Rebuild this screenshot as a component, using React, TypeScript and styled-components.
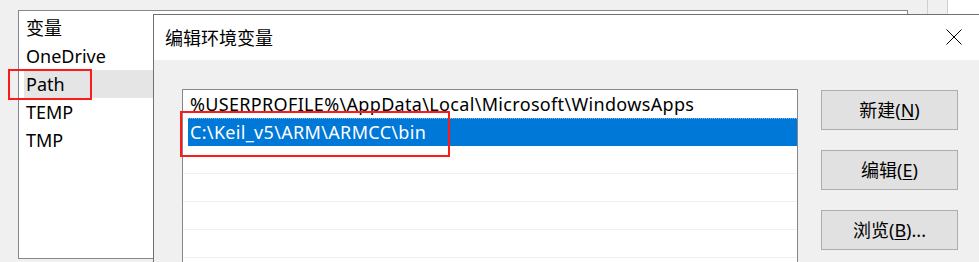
import React from 'react'
import styled, { createGlobalStyle } from 'styled-components'

const GlobalStyle = createGlobalStyle`
  html, body {
    margin: 0;
    padding: 0;
    background: #f0f0f0;
  }
  body {
    font-family: "Noto Sans", "Noto Sans CJK SC", sans-serif;
    font-size: 18px;
    color: #000;
  }
`

const Page = styled.div`
  position: relative;
  width: 979px;
  height: 262px;
  overflow: hidden;
  background: #f0f0f0;
  display: flex;
  align-items: flex-start;
`

const VarPanel = styled.div`
  margin: 10px 0 0 18px;
  width: 890px;
  height: 249px;
  box-sizing: border-box;
  border: 1px solid #828790;
  background: #fff;
  display: flex;
  flex-direction: column;
`

const HeaderRow = styled.div`
  display: flex;
  flex-shrink: 0;
  height: 31px;
  padding-top: 3px;
  box-sizing: border-box;
`

const HeaderCell = styled.div<{ $width?: number }>`
  ${({ $width }) => ($width ? `width: ${$width}px;` : 'flex: 1;')}
  box-sizing: border-box;
  padding-left: 7px;
  line-height: 28px;
  border-right: 1px solid #e5e5e5;
`

const VarRow = styled.div<{ $hover?: boolean }>`
  flex-shrink: 0;
  height: 28px;
  line-height: 28px;
  margin-left: 5px;
  padding-left: 2px;
  background: ${({ $hover }) => ($hover ? '#e5e5e5' : 'transparent')};
`

const SideStrip = styled.div`
  margin-left: 19px;
  width: 19px;
  height: 14px;
  border-left: 1px solid #cfcfcf;
  border-right: 1px solid #cfcfcf;
`

const WhiteStrip = styled.div`
  flex: 1;
  height: 14px;
  background: #fff;
`

const Dialog = styled.div`
  position: absolute;
  left: 153px;
  top: 14px;
  width: 836px;
  height: 258px;
  box-sizing: border-box;
  border: 1px solid #707070;
  background: #f0f0f0;
  display: flex;
  flex-direction: column;
`

const TitleBar = styled.div`
  flex-shrink: 0;
  height: 45px;
  background: #fff;
  display: flex;
  align-items: center;
  justify-content: space-between;
  padding: 0 26px 0 11px;
`

const Title = styled.span`
  font-size: 18px;
  margin-top: -2px;
`

const CloseIcon = styled.svg`
  display: block;
  margin-top: -1px;
`

const Body = styled.div`
  flex-shrink: 0;
  display: flex;
  align-items: flex-start;
  padding: 29px 0 0 28px;
`

const PathList = styled.div`
  width: 616px;
  height: 180px;
  box-sizing: border-box;
  border: 1px solid #828790;
  background: #fff;
  padding-top: 1px;
  overflow: hidden;
`

const PathRow = styled.div<{ $selected?: boolean }>`
  height: 28px;
  box-sizing: border-box;
  line-height: 27px;
  letter-spacing: 0.33px;
  border-bottom: 1px solid ${({ $selected }) => ($selected ? '#0078d7' : '#f0f0f0')};
  padding-left: ${({ $selected }) => ($selected ? '2px' : '7px')};
  margin-left: ${({ $selected }) => ($selected ? '5px' : '0')};
  background: ${({ $selected }) => ($selected ? '#0078d7' : 'transparent')};
  color: ${({ $selected }) => ($selected ? '#fff' : '#000')};
  ${({ $selected }) =>
    $selected &&
    `margin-top: -1px; border-top: 1px dotted #7eb4ea; line-height: 26px;`}
  white-space: nowrap;
`

const ButtonColumn = styled.div`
  margin-left: 23px;
  margin-top: 1px;
  display: flex;
  flex-direction: column;
  gap: 20px;
`

const DialogButton = styled.button`
  width: 137px;
  height: 40px;
  box-sizing: border-box;
  border: 1px solid #adadad;
  background: #e1e1e1;
  font-family: inherit;
  font-size: 18px;
  color: #000;
  padding: 0;
  line-height: 36px;
`

const Mnemonic = styled.span`
  text-decoration: underline;
  text-underline-offset: 2px;
`

const Annotation = styled.div<{ $x: number; $y: number; $w: number; $h: number }>`
  position: absolute;
  left: ${({ $x }) => $x}px;
  top: ${({ $y }) => $y}px;
  width: ${({ $w }) => $w}px;
  height: ${({ $h }) => $h}px;
  box-sizing: border-box;
  border: 2px solid #ff1a1a;
  pointer-events: none;
`

const variables = ['OneDrive', 'Path', 'TEMP', 'TMP']
const paths = ['%USERPROFILE%\\AppData\\Local\\Microsoft\\WindowsApps', 'C:\\Keil_v5\\ARM\\ARMCC\\bin', '', '', '', '']

const App = () => (
  <>
    <GlobalStyle />
    <Page>
      <VarPanel>
        <HeaderRow>
          <HeaderCell $width={268}>变量</HeaderCell>
          <HeaderCell $width={595} />
        </HeaderRow>
        {variables.map((v) => (
          <VarRow key={v} $hover={v === 'Path'}>{v}</VarRow>
        ))}
      </VarPanel>
      <SideStrip />
      <WhiteStrip />

      <Dialog>
        <TitleBar>
          <Title>编辑环境变量</Title>
          <CloseIcon width="16" height="16" viewBox="0 0 16 16">
            <path d="M0.5 0.5 L15.5 15.5 M15.5 0.5 L0.5 15.5" stroke="#000" strokeWidth="1" fill="none" />
          </CloseIcon>
        </TitleBar>
        <Body>
          <PathList>
            {paths.map((p, i) => (
              <PathRow key={i} $selected={i === 1}>{p}</PathRow>
            ))}
          </PathList>
          <ButtonColumn>
            <DialogButton>新建(<Mnemonic>N</Mnemonic>)</DialogButton>
            <DialogButton>编辑(<Mnemonic>E</Mnemonic>)</DialogButton>
            <DialogButton>浏览(<Mnemonic>B</Mnemonic>)...</DialogButton>
          </ButtonColumn>
        </Body>
      </Dialog>

      <Annotation $x={8} $y={69} $w={84} $h={31} />
      <Annotation $x={180} $y={111} $w={270} $h={46} />
    </Page>
  </>
)

export default App
